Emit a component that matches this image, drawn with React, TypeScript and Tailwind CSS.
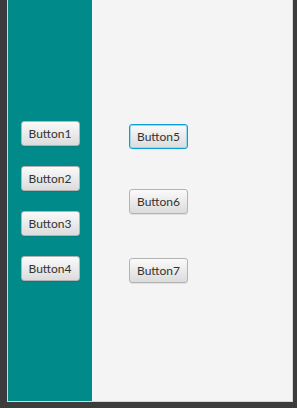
const btn =
    'flex h-[25px] w-[59px] items-center justify-center rounded-[3px] border border-[#b3b3b3] bg-gradient-to-b from-[#fafafa] to-[#dcdcdc] pt-px text-[12px] text-[#333] shadow-[0_1px_0_0_rgba(0,0,0,0.08)]';

export default function App() {
    return (
        <div className="flex h-[408px] w-[297px] bg-[#3c3c3c] font-['Lato',sans-serif]">
            {/* window */}
            <div className="ml-[7px] flex h-[402px] w-[286px] border-b border-l border-r border-[#d6d6d6]">
                {/* left teal column */}
                <div className="flex w-[84px] flex-col items-center bg-[#008b8a] pt-[121px]">
                    <div className="flex flex-col gap-[20px]">
                        <button className={btn}>Button1</button>
                        <button className={btn}>Button2</button>
                        <button className={btn}>Button3</button>
                        <button className={btn}>Button4</button>
                    </div>
                </div>

                {/* right panel */}
                <div className="flex flex-1 flex-col bg-[#f4f4f4] pl-[37px] pt-[124px]">
                    <button className="flex h-[25px] w-[59px] items-center justify-center rounded-[3px] border border-[#0a9fd6] bg-gradient-to-b from-[#fafafa] to-[#dcdcdc] pt-px text-[12px] text-[#333] shadow-[inset_0_0_0_1px_#9fd8ee]">
                        Button5
                    </button>
                    <button className={`${btn} mt-[40px]`}>Button6</button>
                    <button className={`${btn} mt-[44px]`}>Button7</button>
                </div>
            </div>
        </div>
    );
}
